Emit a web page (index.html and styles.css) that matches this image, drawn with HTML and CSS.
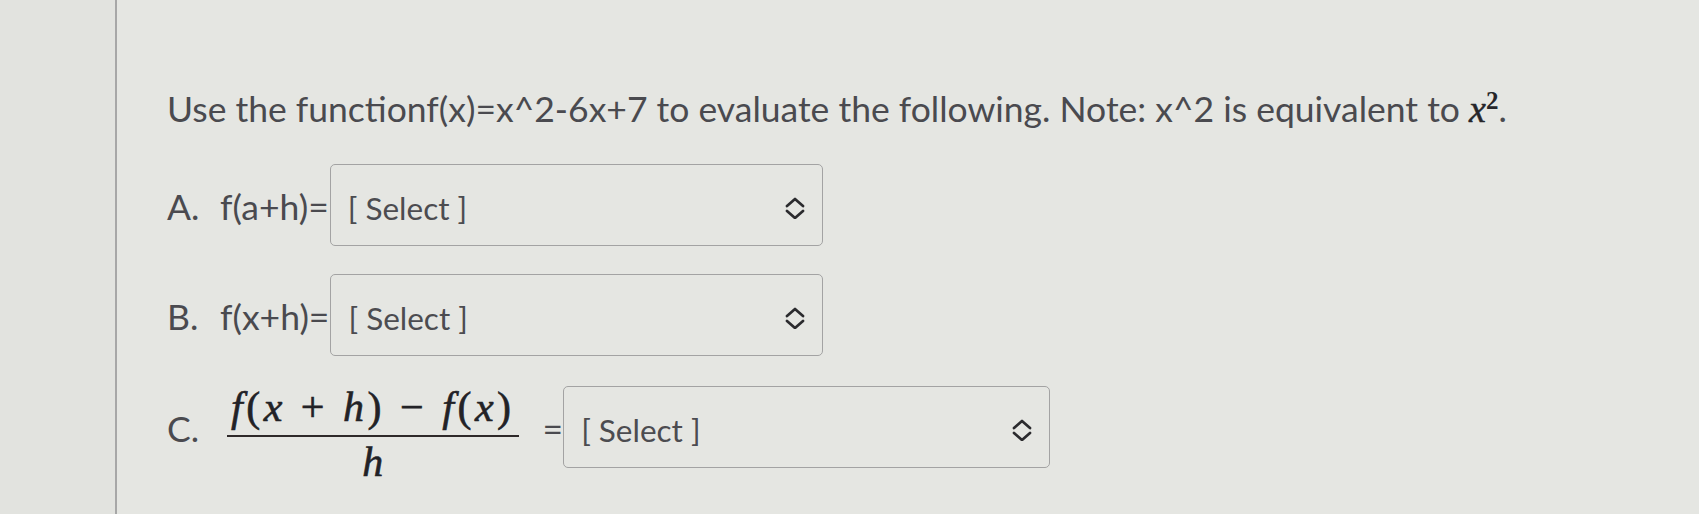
FILE: index.html
```html
<!DOCTYPE html>
<html lang="en">
<head>
  <meta charset="UTF-8" />
  <meta name="viewport" content="width=device-width, initial-scale=1.0"/>
  <title>Quiz question</title>
  <link rel="stylesheet" href="styles.css">
</head>
<body>
  <div class="page">
    <aside class="rail"></aside>

    <main class="question">
      <p class="prompt">Use the functionf(x)=x^2-6x+7 to evaluate the following. Note: x^2 is equivalent to <span class="math-inline"><i>x</i><sup>2</sup></span>.</p>

      <div class="answer">
        <span class="letter">A.</span>
        <span class="label">f(a+h)=</span>
        <div class="select">
          <span class="select-text">[ Select ]</span>
          <svg class="chevron" viewBox="0 0 22 22" width="22" height="22"><path d="M3 9 11 2 19 9M3 14 11 21 19 14"/></svg>
        </div>
      </div>

      <div class="answer">
        <span class="letter">B.</span>
        <span class="label">f(x+h)=</span>
        <div class="select">
          <span class="select-text">[ Select ]</span>
          <svg class="chevron" viewBox="0 0 22 22" width="22" height="22"><path d="M3 9 11 2 19 9M3 14 11 21 19 14"/></svg>
        </div>
      </div>

      <div class="answer">
        <span class="letter">C.</span>
        <span class="fraction">
          <span class="num"><i>f</i><span class="up">(</span><i>x</i><span class="op">+</span><i>h</i><span class="up">)</span><span class="op">−</span><i>f</i><span class="up">(</span><i>x</i><span class="up">)</span></span>
          <span class="den"><i>h</i></span>
        </span>
        <span class="equals">=</span>
        <div class="select wide">
          <span class="select-text">[ Select ]</span>
          <svg class="chevron" viewBox="0 0 22 22" width="22" height="22"><path d="M3 9 11 2 19 9M3 14 11 21 19 14"/></svg>
        </div>
      </div>
    </main>
  </div>
</body>
</html>
```

FILE: styles.css
```css
body {
  margin: 0;
  background-color: #e5e6e2;
  color: #4a4a4f;
  font-family: Lato, "Noto Sans", sans-serif;
}

.page {
  display: flex;
  min-height: 514px;
}

.rail {
  width: 115px;
  flex-shrink: 0;
  background-color: #e2e3df;
  border-right: 2px solid #a7a7a7;
}

.question {
  padding-left: 50px;
}

.prompt {
  margin: 0;
  padding-top: 87px;
  font-size: 35.5px;
  line-height: 44px;
  white-space: nowrap;
}

.math-inline {
  font-family: "Liberation Serif", serif;
  color: #26262a;
}

.math-inline i {
  font-size: 38px;
  -webkit-text-stroke: 0.5px #26262a;
}

.math-inline sup {
  font-size: 25px;
  font-weight: bold;
  line-height: 0;
}

.answer {
  display: flex;
  align-items: baseline;
  margin-top: 28px;
  font-size: 35.5px;
}

.prompt + .answer {
  margin-top: 32px;
}

.answer:last-child {
  margin-top: 30px;
}

.letter {
  width: 53px;
  flex-shrink: 0;
}

.label {
  margin-right: 1px;
}

.select {
  box-sizing: border-box;
  width: 493px;
  height: 82px;
  padding: 6px 16px 0 17px;
  border: 1.5px solid #a3a3a3;
  border-radius: 5px;
  display: flex;
  align-items: center;
  justify-content: space-between;
  font-size: 31.5px;
  color: #4c4c50;
}

.select.wide {
  width: 487px;
}

.chevron path {
  fill: none;
  stroke: #2b2b2e;
  stroke-width: 2.7;
  stroke-linecap: round;
  stroke-linejoin: round;
}

.fraction {
  align-self: flex-start;
  display: flex;
  flex-direction: column;
  align-items: center;
  margin-left: 7px;
  font-family: "Liberation Serif", serif;
  font-size: 42px;
  line-height: 42px;
  color: #222226;
  -webkit-text-stroke: 0.6px #222226;
}

.num {
  padding: 0 4px 7px;
  border-bottom: 2px solid #2e2929;
  letter-spacing: 3.5px;
  white-space: nowrap;
}

.den {
  margin-top: 4px;
}

.up {
  font-style: normal;
}

.op {
  margin: 0 15px;
}

.equals {
  margin-left: 24px;
}
```
